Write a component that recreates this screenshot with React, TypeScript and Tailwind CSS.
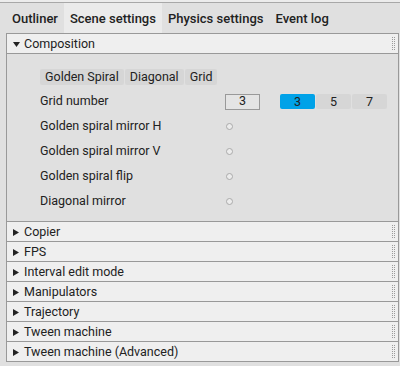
import { useState } from 'react'

const sections = [
  'Copier',
  'FPS',
  'Interval edit mode',
  'Manipulators',
  'Trajectory',
  'Tween machine',
  'Tween machine (Advanced)',
]

const toggles = ['Golden spiral mirror H', 'Golden spiral mirror V', 'Golden spiral flip', 'Diagonal mirror']

function Grip() {
  const dots = []
  for (let r = 0; r < 7; r++) {
    dots.push(<rect key={'a' + r} x={0} y={r * 2} width={1} height={1} fill="#9a9a9a" />)
    dots.push(<rect key={'b' + r} x={2} y={r * 2} width={1} height={1} fill="#9a9a9a" />)
  }
  return (
    <svg width="3" height="13" className="shrink-0">
      {dots}
    </svg>
  )
}

function Header({ label, open }: { label: string; open?: boolean }) {
  return (
    <div className="flex h-[20px] items-center border-b border-[#999] bg-[#efefef] pl-[6px] pr-[3px]">
      <span className="flex w-[11px] shrink-0 items-center pt-[1px]">
        {open ? (
          <svg width="7" height="5">
            <polygon points="0,0 7,0 3.5,5" fill="#222" />
          </svg>
        ) : (
          <svg width="6" height="7">
            <polygon points="0,0 6,3.5 0,7" fill="#222" />
          </svg>
        )}
      </span>
      <span className="flex-1 pt-[2px] text-[12.5px] text-[#222]">{label}</span>
      <Grip />
    </div>
  )
}

export default function App() {
  const [tab, setTab] = useState('Scene settings')
  const [mode, setMode] = useState('Golden Spiral')
  const [grid, setGrid] = useState(3)

  return (
    <div
      className="h-[366px] w-[400px] overflow-hidden bg-[#e0e0e0]"
      style={{ fontFamily: 'Roboto, "Liberation Sans", sans-serif' }}
    >
      <div className="h-[2px] bg-[#ececec]" />
      <div className="flex h-[31px] border-t border-[#a8a8a8] pl-[6px]">
        {['Outliner', 'Scene settings', 'Physics settings', 'Event log'].map((t) => (
          <button
            key={t}
            onClick={() => setTab(t)}
            className={`px-[6px] pt-[1px] text-[13px] font-medium text-[#222] ${
              tab === t ? 'bg-[#ebebeb]' : ''
            }`}
          >
            {t}
          </button>
        ))}
      </div>

      <div className="ml-[6px] mr-[1px] border-l border-r border-[#999]">
        <div className="border-t border-[#999]">
          <Header label="Composition" open />
        </div>

        <div className="h-[168px] border-b border-[#999] pl-[33px] pt-[10px] text-[12.5px] text-[#222]">
          <div className="flex h-[25px] items-center gap-px">
            {['Golden Spiral', 'Diagonal', 'Grid'].map((m) => (
              <button
                key={m}
                onClick={() => setMode(m)}
                className={`h-[16px] rounded-[2px] px-[5px] leading-[16px] ${
                  mode === m ? 'bg-[#d6d6d6]' : 'bg-[#d6d6d6]'
                }`}
              >
                {m}
              </button>
            ))}
          </div>

          <div className="flex h-[25px] items-center">
            <span className="w-[185px]">Grid number</span>
            <div className="flex h-[16px] w-[35px] items-center justify-center border border-[#999] bg-[#e4e4e4]">
              {grid}
            </div>
            <div className="ml-[20px] flex gap-px">
              {[3, 5, 7].map((n) => (
                <button
                  key={n}
                  onClick={() => setGrid(n)}
                  className={`h-[15px] w-[35px] rounded-[2px] leading-[15px] ${
                    grid === n ? 'bg-[#00a2e8]' : 'bg-[#d6d6d6]'
                  }`}
                >
                  {n}
                </button>
              ))}
            </div>
          </div>

          {toggles.map((t) => (
            <div key={t} className="flex h-[25px] items-center">
              <span className="w-[186px]">{t}</span>
              <span className="h-[7px] w-[7px] rounded-full border border-[#aaa] bg-[#ececec]" />
            </div>
          ))}
        </div>

        {sections.map((s) => (
          <Header key={s} label={s} />
        ))}
      </div>
    </div>
  )
}
